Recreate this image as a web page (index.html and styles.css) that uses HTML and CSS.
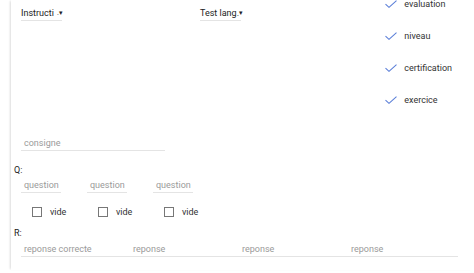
FILE: index.html
```html
<!DOCTYPE html>
<html>
<head>
<meta charset="utf-8">
<link rel="stylesheet" href="styles.css">
</head>
<body>
<div class="card">
  <div class="top">
    <div class="selects">
      <div class="select sel1"><span>Instructi</span><span class="arrow">.▾</span></div>
      <div class="select sel2"><span>Test lang.</span><span class="arrow">▾</span></div>
    </div>
    <ul class="checks">
      <li><svg class="tick" viewBox="0 0 12 8"><path d="M0.5 4.2 L4 7.3 L11.5 0.6"/></svg>evaluation</li>
      <li><svg class="tick" viewBox="0 0 12 8"><path d="M0.5 4.2 L4 7.3 L11.5 0.6"/></svg>niveau</li>
      <li><svg class="tick" viewBox="0 0 12 8"><path d="M0.5 4.2 L4 7.3 L11.5 0.6"/></svg>certification</li>
      <li><svg class="tick" viewBox="0 0 12 8"><path d="M0.5 4.2 L4 7.3 L11.5 0.6"/></svg>exercice</li>
    </ul>
  </div>
  <div class="field consigne"><span class="ph">consigne</span></div>
  <div class="label q">Q:</div>
  <div class="row questions">
    <div class="field small"><span class="ph">question</span></div>
    <div class="field small"><span class="ph">question</span></div>
    <div class="field small"><span class="ph">question</span></div>
  </div>
  <div class="row boxes">
    <label class="cb"><span class="box"></span>vide</label>
    <label class="cb"><span class="box"></span>vide</label>
    <label class="cb"><span class="box"></span>vide</label>
  </div>
  <div class="label r">R:</div>
  <div class="answers">
    <span class="ph a1">reponse correcte</span>
    <span class="ph a2">reponse</span>
    <span class="ph a3">reponse</span>
    <span class="ph a4">reponse</span>
  </div>
</div>
</body>
</html>
```
FILE: styles.css
```css
* { box-sizing: border-box; }
html, body { margin: 0; padding: 0; background: #fff; overflow: hidden; }
body {
  font-family: Roboto, "Liberation Sans", sans-serif;
  font-size: 9px;
  color: #333;
  width: 474px;
  height: 273px;
}
.card {
  margin-left: 11px;
  height: 270px;
  padding-left: 3px;
  box-shadow: -2px 0 2px -1px rgba(0, 0, 0, 0.14);
  display: flex;
  flex-direction: column;
}
.top {
  display: flex;
  height: 131px;
}
.selects {
  display: flex;
  align-items: flex-start;
  padding-top: 6px;
}
.select {
  height: 15px;
  display: flex;
  align-items: center;
  border-bottom: 1px solid #e4e4e4;
  color: #222;
  width: 41px;
  white-space: nowrap;
}
.sel1 { margin-left: 7px; }
.sel2 { margin-left: 138px; }
.select .arrow { font-size: 7px; margin-left: 3px; }
.sel2 .arrow { margin-left: 0; }
.checks {
  list-style: none;
  margin: -12px 0 0 auto;
  padding: 0 22px 0 0;
}
.checks li {
  height: 32px;
  display: flex;
  align-items: center;
  color: #333;
  white-space: nowrap;
}
.tick {
  width: 12px;
  height: 8px;
  margin-right: 7px;
  fill: none;
  stroke: #5b7fd8;
  stroke-width: 1.1;
}
.field {
  border-bottom: 1px solid #e4e4e4;
  height: 15px;
  display: flex;
  align-items: center;
  padding-left: 3px;
}
.ph { color: #9a9a9a; white-space: nowrap; }
.consigne {
  width: 144px;
  margin-left: 7px;
  margin-top: 5px;
}
.label {
  height: 14px;
  display: flex;
  align-items: center;
  color: #222;
}
.q { margin-top: 12px; }
.row { display: flex; }
.questions { margin-left: 7px; margin-top: 1px; gap: 26px; }
.field.small { width: 40px; }
.boxes { margin-left: 18px; margin-top: 13px; height: 12px; align-items: center; }
.cb { display: flex; align-items: center; width: 66px; color: #333; }
.box {
  width: 10px;
  height: 10px;
  border: 1px solid #777;
  margin-right: 8px;
}
.r { margin-top: 8px; }
.answers {
  margin-left: 7px;
  width: 437px;
  height: 15px;
  margin-top: 2px;
  display: flex;
  align-items: center;
  border-bottom: 1px solid #e4e4e4;
  padding-left: 3px;
}
.a1 { width: 109px; }
.a2 { width: 109px; }
.a3 { width: 109px; }
```
